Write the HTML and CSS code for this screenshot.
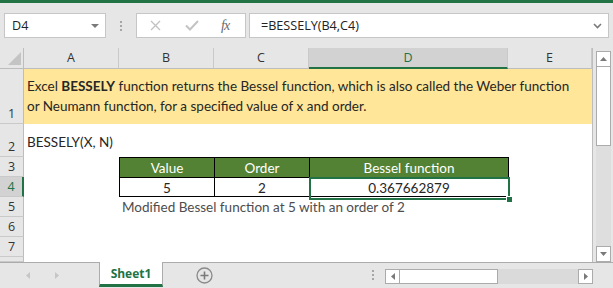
FILE: index.html
```html
<!DOCTYPE html>
<html lang="en">

<head>
    <meta charset="UTF-8">
    <meta name="viewport" content="width=device-width, initial-scale=1.0">
    <title>BESSELY</title>
    <link rel="stylesheet" href="styles.css">
</head>

<body>
    <div class="titlebar"></div>

    <div class="toolbar">
        <div class="namebox">
            <span>D4</span>
            <svg class="caret" width="8" height="5" viewBox="0 0 8 5"><polygon points="0,0 8,0 4,4" fill="#7a7a7a"/></svg>
        </div>
        <div class="grip"><i></i><i></i><i></i></div>
        <div class="fxbox">
            <svg width="11" height="11" viewBox="0 0 11 11"><path d="M1 1 L10 10 M10 1 L1 10" stroke="#c3c3c3" stroke-width="1.4" fill="none"/></svg>
            <svg width="14" height="11" viewBox="0 0 14 11"><path d="M1 5.5 L5 9.5 L13 1" stroke="#c3c3c3" stroke-width="2" fill="none"/></svg>
            <span class="fx">fx</span>
        </div>
        <div class="formula">
            <span>=BESSELY(B4,C4)</span>
            <svg class="chevron" width="9" height="6" viewBox="0 0 9 6"><path d="M1 1 L4.5 4.5 L8 1" stroke="#7a7a7a" stroke-width="1.6" fill="none"/></svg>
        </div>
    </div>

    <div class="main">
        <div class="grid">
            <!-- column headers -->
            <div class="corner">
                <svg width="13" height="13" viewBox="0 0 13 13"><polygon points="13,0 13,13 0,13" fill="#c4c4c4"/></svg>
            </div>
            <div class="ch">A</div>
            <div class="ch">B</div>
            <div class="ch">C</div>
            <div class="ch ch-sel">D</div>
            <div class="ch">E</div>

            <!-- row 1 -->
            <div class="rh">1</div>
            <div class="note">Excel <b>BESSELY</b> function returns the Bessel function, which is also called the Weber function<br>or Neumann function, for a specified value of x and order.</div>

            <!-- row 2 -->
            <div class="rh">2</div>
            <div class="syntax">BESSELY(X, N)</div>

            <!-- row 3 -->
            <div class="rh">3</div>
            <div class="cell"></div>
            <div class="cell th first">Value</div>
            <div class="cell th">Order</div>
            <div class="cell th">Bessel function</div>
            <div class="cell edge"></div>

            <!-- row 4 -->
            <div class="rh rh-sel">4</div>
            <div class="cell"></div>
            <div class="cell td first">5</div>
            <div class="cell td">2</div>
            <div class="cell td active">0.367662879<div class="sel"><span class="handle"></span></div></div>
            <div class="cell edge"></div>

            <!-- row 5 -->
            <div class="rh">5</div>
            <div class="cell"></div>
            <div class="cell caption">Modified Bessel function at 5 with an order of 2</div>

            <div class="rh">6</div>
            <div class="cell wide"></div>
            <div class="rh">7</div>
            <div class="cell wide"></div>
            <div class="rh"></div>
            <div class="cell wide"></div>
        </div>

        <div class="vscroll">
            <div class="sbtn">
                <svg width="7" height="4" viewBox="0 0 7 4"><polygon points="0,4 7,4 3.5,0" fill="#7a7a7a"/></svg>
            </div>
            <div class="vthumb"></div>
            <div class="vtrack"></div>
            <div class="sbtn">
                <svg width="7" height="4" viewBox="0 0 7 4"><polygon points="0,0 7,0 3.5,4" fill="#7a7a7a"/></svg>
            </div>
        </div>
    </div>

    <div class="tabbar">
        <div class="tabnav">
            <svg width="4" height="7" viewBox="0 0 4 7"><polygon points="4,0 4,7 0,3.5" fill="#c6c6c6"/></svg>
            <svg width="4" height="7" viewBox="0 0 4 7"><polygon points="0,0 0,7 4,3.5" fill="#c6c6c6"/></svg>
        </div>
        <div class="tab">Sheet1</div>
        <svg class="addsheet" width="17" height="17" viewBox="0 0 17 17">
            <circle cx="8.5" cy="8.5" r="7.5" stroke="#8a8a8a" stroke-width="1.3" fill="none"/>
            <path d="M8.5 4.5 V12.5 M4.5 8.5 H12.5" stroke="#7a7a7a" stroke-width="1.6"/>
        </svg>
        <div class="grip grip-low"><i></i><i></i><i></i></div>
        <div class="hscroll">
            <div class="sbtn hbtn">
                <svg width="4" height="7" viewBox="0 0 4 7"><polygon points="4,0 4,7 0,3.5" fill="#7a7a7a"/></svg>
            </div>
            <div class="hthumb"></div>
            <div class="htrack"></div>
            <div class="sbtn hbtn">
                <svg width="4" height="7" viewBox="0 0 4 7"><polygon points="0,0 0,7 4,3.5" fill="#7a7a7a"/></svg>
            </div>
        </div>
    </div>
</body>

</html>
```

FILE: styles.css
```css
*{
    box-sizing: border-box;
}
body{
    margin: 0;
    width: 613px;
    height: 288px;
    overflow: hidden;
    background-color: #e6e6e6;
    font-family: "Open Sans", "Noto Sans", sans-serif;
}
.titlebar{
    height: 3px;
    background-color: #217346;
}

/* formula bar */
.toolbar{
    height: 45px;
    padding-top: 10px;
    display: flex;
    align-items: flex-start;
}
.namebox{
    margin-left: 4px;
    width: 102px;
    height: 25px;
    background-color: white;
    border: 1px solid #c6c6c6;
    display: flex;
    align-items: center;
    justify-content: space-between;
    padding: 0 6px 0 7px;
    font-size: 12.6px;
    color: #222;
}
.caret{
    margin-top: 1px;
}
.grip{
    width: 30px;
    height: 25px;
    display: flex;
    flex-direction: column;
    align-items: center;
    justify-content: center;
    gap: 2px;
}
.grip i{
    display: block;
    width: 2px;
    height: 2px;
    background-color: #a6a6a6;
}
.fxbox{
    width: 110px;
    height: 25px;
    background-color: white;
    border: 1px solid #c6c6c6;
    display: flex;
    align-items: center;
    padding-left: 13px;
}
.fxbox svg:nth-child(2){
    margin-left: 24px;
}
.fx{
    margin-left: 22px;
    font-family: "Liberation Serif", serif;
    font-style: italic;
    font-size: 14px;
    color: #6a6a6a;
    letter-spacing: -1px;
}
.formula{
    margin-left: 3px;
    width: 360px;
    height: 25px;
    background-color: white;
    border: 1px solid #c6c6c6;
    display: flex;
    align-items: center;
    justify-content: space-between;
    padding: 0 6px 0 11px;
    font-size: 12.6px;
    color: #222;
}

/* sheet */
.main{
    display: flex;
    height: 214px;
}
.grid{
    display: grid;
    grid-template-columns: 24px 95px 95px 95px 199px 84px;
    grid-template-rows: 21px 55px 33px 20px 20px 20px 20px 20px 5px;
    width: 593px;
    background-color: white;
    border-right: 1px solid #bdbdbd;
    font-family: Lato, "Open Sans", sans-serif;
    font-size: 13.5px;
    color: #262626;
}
.corner{
    background-color: #e6e6e6;
    border-right: 1px solid #bdbdbd;
    border-bottom: 1px solid #bdbdbd;
    display: flex;
    align-items: flex-end;
    justify-content: flex-end;
    padding: 0 2px 3px 0;
}
.ch{
    background-color: #e6e6e6;
    border-right: 1px solid #c9c9c9;
    border-bottom: 1px solid #bdbdbd;
    font-family: "Open Sans", sans-serif;
    font-size: 12.5px;
    line-height: 20px;
    text-align: center;
    color: #333;
}
.ch:last-child{
    border-right: none;
}
.ch-sel{
    background-color: #d2d2d2;
    border-bottom: 2px solid #217346;
    color: #217346;
}
.rh{
    grid-column: 1;
    background-color: #e6e6e6;
    border-right: 1px solid #bdbdbd;
    border-bottom: 1px solid #c9c9c9;
    font-family: "Open Sans", sans-serif;
    font-size: 12.5px;
    line-height: 18px;
    color: #333;
    display: flex;
    align-items: flex-end;
    justify-content: center;
}
.rh-sel{
    background-color: #d2d2d2;
    border-right: 2px solid #217346;
    color: #217346;
}
.note{
    grid-column: 2 / 7;
    background-color: #ffe699;
    padding: 7px 0 0 3px;
    line-height: 20px;
}
.syntax{
    grid-column: 2 / 7;
    display: flex;
    align-items: flex-end;
    padding: 0 0 5px 3px;
    line-height: 20px;
}
.cell{
    position: relative;
    line-height: 19px;
    padding-top: 1px;
}
.wide{
    grid-column: 2 / 7;
}
.th, .td{
    text-align: center;
    border-top: 1px solid black;
    border-left: 1px solid black;
}
.th{
    background-color: #548235;
    color: white;
}
.td{
    border-bottom: 1px solid black;
}
.edge{
    border-left: 1px solid black;
}
.caption{
    grid-column: 3 / 7;
    padding-left: 3px;
    color: #4d4d4d;
}
.sel{
    position: absolute;
    left: -1px;
    top: -1px;
    width: 201px;
    height: 23px;
    border: 2px solid #217346;
    z-index: 2;
}
.handle{
    position: absolute;
    left: 195px;
    top: 17px;
    width: 7px;
    height: 7px;
    background-color: #217346;
    border: 1px solid white;
}

/* scrollbars */
.vscroll{
    margin-left: 3px;
    width: 15px;
    padding-top: 3px;
    display: flex;
    flex-direction: column;
}
.sbtn{
    height: 16px;
    background-color: white;
    border: 1px solid #ababab;
    display: flex;
    align-items: center;
    justify-content: center;
}
.vthumb{
    height: 80px;
    margin-top: -1px;
    background-color: white;
    border: 1px solid #ababab;
}
.vtrack{
    flex: 1;
    background-color: #dedede;
}

.tabbar{
    height: 26px;
    border-top: 1px solid #ababab;
    display: flex;
    align-items: flex-start;
}
.tabnav{
    width: 99px;
    height: 25px;
    display: flex;
    align-items: center;
    gap: 25px;
    padding-left: 26px;
}
.tab{
    width: 64px;
    height: 25px;
    margin-top: -1px;
    background-color: white;
    border-left: 1px solid #ababab;
    border-right: 1px solid #ababab;
    border-bottom: 3px solid #217346;
    color: #217346;
    font-weight: bold;
    font-size: 12px;
    text-align: center;
    line-height: 23px;
}
.addsheet{
    margin-left: 33px;
    margin-top: 4px;
}
.grip-low{
    margin-left: auto;
    width: 8px;
    height: 24px;
}
.hscroll{
    margin-left: 8px;
    margin-right: 20px;
    margin-top: 6px;
    width: 208px;
    height: 15px;
    display: flex;
}
.hbtn{
    width: 15px;
    height: 15px;
}
.hthumb{
    width: 99px;
    margin-left: -1px;
    background-color: white;
    border: 1px solid #ababab;
}
.htrack{
    flex: 1;
    background-color: #dadada;
}
```
